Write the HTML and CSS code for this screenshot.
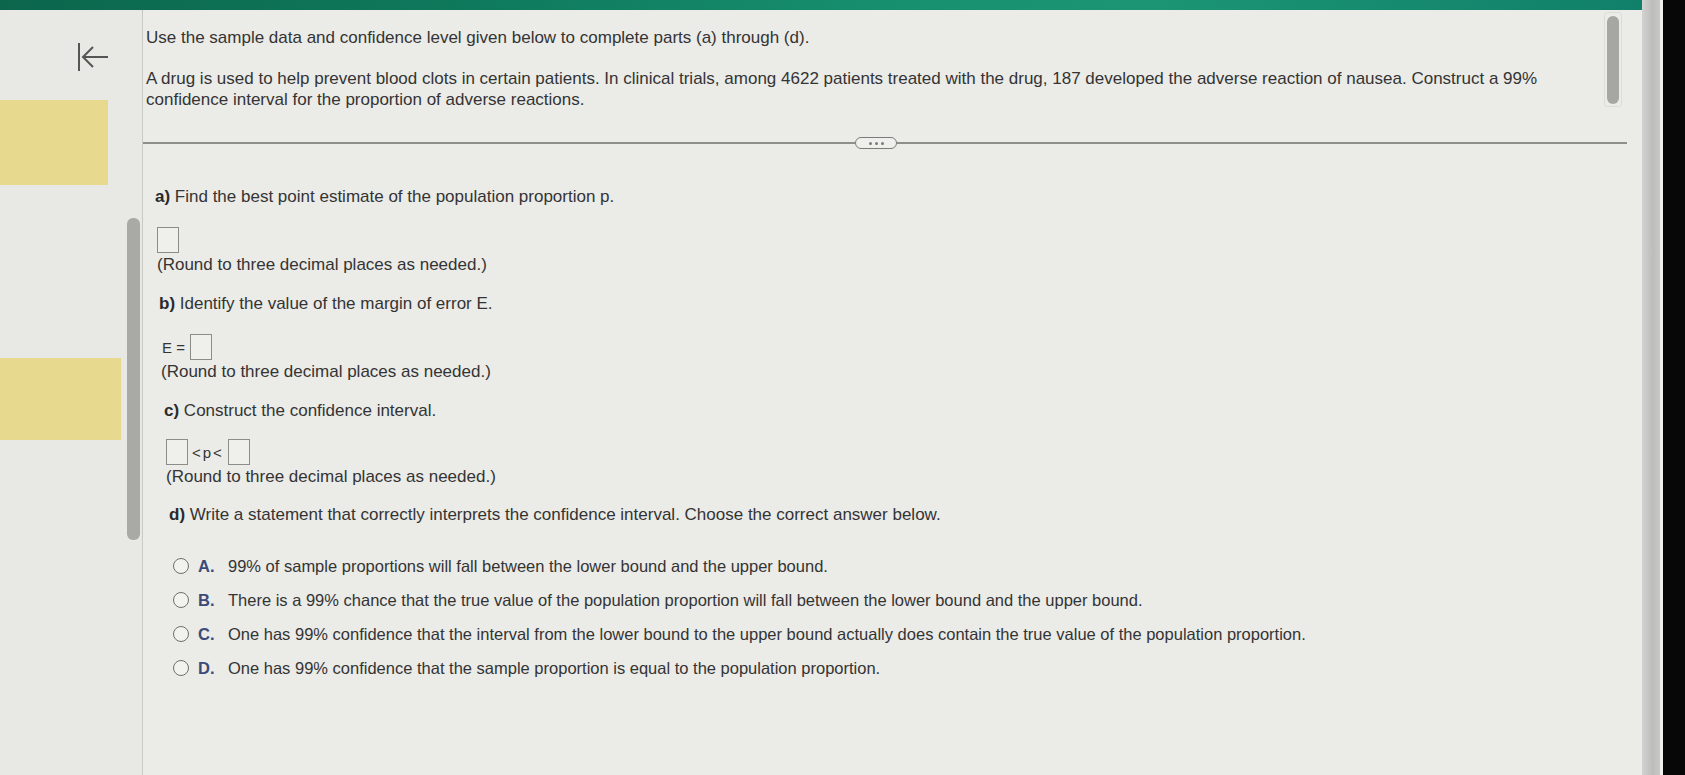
FILE: index.html
```html
<!DOCTYPE html>
<html lang="en">
<head>
<meta charset="utf-8">
<title>Confidence interval question</title>
<link rel="stylesheet" href="styles.css">
</head>
<body>
<div class="screen">
  <div class="display">
    <div class="topbar"></div>
    <div class="body-row">
      <aside class="sidebar">
        <div class="side-col">
          <button class="back-btn" aria-label="Back">
            <svg width="32" height="30" viewBox="0 0 32 30" aria-hidden="true">
              <line x1="2" y1="1" x2="2" y2="29" stroke="#555" stroke-width="2"/>
              <line x1="6" y1="15" x2="31" y2="15" stroke="#555" stroke-width="2"/>
              <polyline points="16,5 6,15 16,25" fill="none" stroke="#555" stroke-width="2"/>
            </svg>
          </button>
          <div class="yellow yellow-1"></div>
          <div class="yellow yellow-2"></div>
        </div>
        <div class="side-scroll"><div class="side-thumb"></div></div>
      </aside>
      <main class="content">
        <div class="header-row">
          <div class="header-text">
            <p class="title">Use the sample data and confidence level given below to complete parts (a) through (d).</p>
            <p class="problem">A drug is used to help prevent blood clots in certain patients. In clinical trials, among 4622 patients treated with the drug, 187 developed the adverse reaction of nausea. Construct a 99%<br>confidence interval for the proportion of adverse reactions.</p>
          </div>
          <div class="scroll-col"><div class="scroll-track"><div class="scroll-thumb"></div></div></div>
        </div>
        <div class="separator">
          <div class="sep-line sep-left"></div>
          <div class="sep-pill"><span class="dot"></span><span class="dot"></span><span class="dot"></span></div>
          <div class="sep-line sep-right"></div>
        </div>
        <div class="parts">
          <p class="part-label first"><b>a)</b> Find the best point estimate of the population proportion p.</p>
          <div class="answer-row gap-after-label shift-1"><span class="answer-box"></span></div>
          <p class="hint shift-1">(Round to three decimal places as needed.)</p>

          <p class="part-label gap-part shift-2"><b>b)</b> Identify the value of the margin of error E.</p>
          <div class="answer-row gap-after-label shift-3"><span class="eq">E =</span><span class="answer-box"></span></div>
          <p class="hint shift-3">(Round to three decimal places as needed.)</p>

          <p class="part-label gap-part shift-4"><b>c)</b> Construct the confidence interval.</p>
          <div class="answer-row gap-after-label-c shift-5"><span class="answer-box"></span><span class="ineq">&lt;p&lt;</span><span class="answer-box"></span></div>
          <p class="hint shift-5">(Round to three decimal places as needed.)</p>

          <p class="part-label gap-part-d shift-6"><b>d)</b> Write a statement that correctly interprets the confidence interval. Choose the correct answer below.</p>

          <ul class="options">
            <li class="option"><span class="radio"></span><span class="opt-letter">A.</span><span class="opt-text">99% of sample proportions will fall between the lower bound and the upper bound.</span></li>
            <li class="option"><span class="radio"></span><span class="opt-letter">B.</span><span class="opt-text">There is a 99% chance that the true value of the population proportion will fall between the lower bound and the upper bound.</span></li>
            <li class="option"><span class="radio"></span><span class="opt-letter">C.</span><span class="opt-text">One has 99% confidence that the interval from the lower bound to the upper bound actually does contain the true value of the population proportion.</span></li>
            <li class="option"><span class="radio"></span><span class="opt-letter">D.</span><span class="opt-text">One has 99% confidence that the sample proportion is equal to the population proportion.</span></li>
          </ul>
        </div>
      </main>
    </div>
  </div>
  <div class="bezel"></div>
  <div class="edge"></div>
  <div class="outside"></div>
</div>
</body>
</html>
```

FILE: styles.css
```css
html, body {
  margin: 0;
  padding: 0;
  background: #070707;
}

body {
  font-family: "Liberation Sans", Arial, sans-serif;
  font-size: 17px;
  color: #343434;
}

.screen {
  display: flex;
  width: 1685px;
  height: 775px;
  overflow: hidden;
}

.display {
  width: 1642px;
  display: flex;
  flex-direction: column;
  background: #ebebe8;
}

.topbar {
  height: 10px;
  background: linear-gradient(90deg, #0b664c 0%, #0f7a5d 30%, #17906f 55%, #1b9574 70%, #11806a 100%);
}

.body-row {
  flex: 1;
  display: flex;
}

/* Sidebar */
.sidebar {
  width: 142px;
  display: flex;
  background: #e8e8e5;
  border-right: 1px solid #c8c8c5;
}

.side-col {
  width: 125px;
  display: flex;
  flex-direction: column;
}

.back-btn {
  margin: 32px 0 0 77px;
  padding: 0;
  border: 0;
  background: none;
  width: 32px;
  height: 30px;
  display: block;
}

.back-btn svg {
  display: block;
}

.yellow {
  background: #e7d98d;
}

.yellow-1 {
  margin-top: 28px;
  width: 108px;
  height: 85px;
}

.yellow-2 {
  margin-top: 173px;
  width: 121px;
  height: 82px;
}

.side-scroll {
  width: 17px;
  display: flex;
  justify-content: center;
}

.side-thumb {
  margin-top: 208px;
  width: 13px;
  height: 322px;
  border-radius: 6px;
  background: #a9a9a6;
}

/* Content */
.content {
  flex: 1;
  display: flex;
  flex-direction: column;
}

.header-row {
  display: flex;
}

.header-text {
  flex: 1;
  padding: 18px 0 0 3px;
}

.title {
  margin: 0;
  line-height: 20px;
}

.problem {
  margin: 20px 0 0 0;
  line-height: 21px;
}

.scroll-col {
  width: 34px;
  padding-right: 12px;
  display: flex;
  justify-content: center;
}

.scroll-track {
  margin-top: 2px;
  width: 18px;
  height: 95px;
  border: 1px solid #dcdcd9;
  border-radius: 3px;
  display: flex;
  justify-content: center;
  box-sizing: border-box;
}

.scroll-thumb {
  margin-top: 3px;
  width: 12px;
  height: 88px;
  border-radius: 6px;
  background: #a6a6a3;
}

.separator {
  margin: 27px 15px 0 0;
  height: 12px;
  display: flex;
  align-items: center;
}

.sep-line {
  height: 2px;
  background: #8e8e8b;
}

.sep-left {
  width: 712px;
}

.sep-right {
  flex: 1;
}

.sep-pill {
  width: 42px;
  height: 12px;
  box-sizing: border-box;
  border: 1.5px solid #7a7a78;
  border-radius: 6px;
  display: flex;
  align-items: center;
  justify-content: center;
  gap: 3px;
  background: #efefec;
}

.dot {
  width: 3px;
  height: 3px;
  border-radius: 50%;
  background: #7a7a78;
}

.parts {
  padding-left: 12px;
}

.parts p {
  margin: 0;
  line-height: 20px;
}

.parts .part-label.first {
  padding-top: 38px;
}

.part-label b {
  font-weight: bold;
  color: #2a2a2a;
}

.parts .part-label.gap-part {
  padding-top: 19px;
}

.parts .part-label.gap-part-d {
  padding-top: 18px;
}

/* slight progressive indent following the photo's perspective */
.parts .shift-1 { margin-left: 2px; }
.parts .shift-2 { margin-left: 4px; }
.parts .shift-3 { margin-left: 6px; }
.parts .shift-4 { margin-left: 9px; }
.parts .shift-5 { margin-left: 11px; }
.parts .shift-6 { margin-left: 14px; }

.answer-row {
  display: flex;
  align-items: center;
  height: 26px;
}

.gap-after-label {
  margin-top: 20px;
}

.gap-after-label-c {
  margin-top: 18px;
}

.parts .hint {
  margin-top: 2px;
}

.answer-box {
  display: inline-block;
  width: 20px;
  height: 24px;
  border: 1px solid #8c8c8a;
  background: #efefec;
}

.eq {
  font-size: 15px;
  margin: 0 5px 0 1px;
}

.ineq {
  font-size: 15px;
  margin: 0 4px;
  letter-spacing: 2px;
}

.options {
  list-style: none;
  margin: 31px 0 0 0;
  padding: 0 0 0 18px;
}

.option {
  display: flex;
  align-items: center;
  height: 20px;
  line-height: 20px;
  margin-bottom: 14px;
  font-size: 16.5px;
}

.radio {
  width: 16px;
  height: 16px;
  box-sizing: border-box;
  border: 1.5px solid #6e6e6c;
  border-radius: 50%;
  background: #f2f2ef;
}

.opt-letter {
  width: 30px;
  margin-left: 9px;
  font-weight: bold;
  color: #3b4a78;
}

.opt-text {
  color: #343434;
}

/* Monitor bezel */
.bezel {
  width: 18px;
  background: linear-gradient(90deg, #d2d3d0, #bdbebb 60%, #c8c9c6);
}

.edge {
  width: 3px;
  background: #eef0f0;
}

.outside {
  flex: 1;
  background: #070707;
}
```
